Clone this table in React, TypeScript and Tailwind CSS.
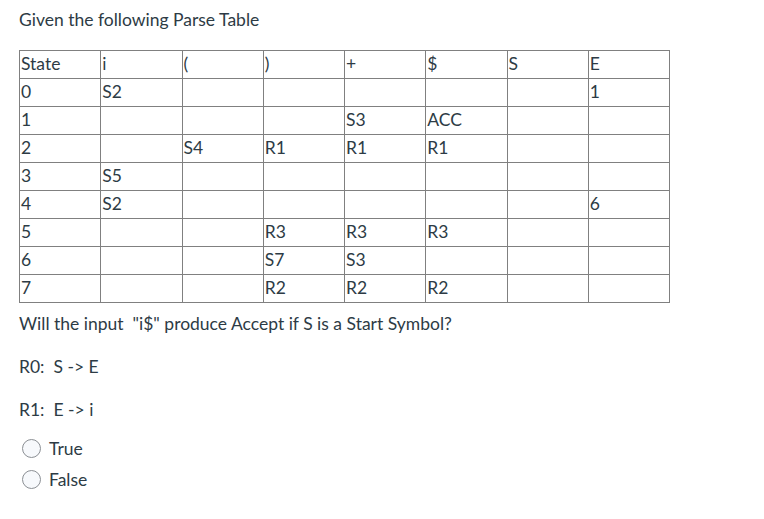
const header = ["State", "i", "(", ")", "+", "$", "S", "E"];

const rows: string[][] = [
  ["0", "S2", "", "", "", "", "", "1"],
  ["1", "", "", "", "S3", "ACC", "", ""],
  ["2", "", "S4", "R1", "R1", "R1", "", ""],
  ["3", "S5", "", "", "", "", "", ""],
  ["4", "S2", "", "", "", "", "", "6"],
  ["5", "", "", "R3", "R3", "R3", "", ""],
  ["6", "", "", "S7", "S3", "", "", ""],
  ["7", "", "", "R2", "R2", "R2", "", ""],
];

function Radio({ label }: { label: string }) {
  return (
    <label className="flex items-center h-[31px] cursor-pointer">
      <span className="ml-[3px] w-[19px] h-[19px] rounded-full border border-[#8b8f94] bg-[#f7f9fc]" />
      <span className="ml-[8px]">{label}</span>
    </label>
  );
}

export default function App() {
  return (
    <div
      className="min-h-[519px] bg-white pl-[19px] pt-[8px] text-[17.5px] leading-[24px] text-[#2d3b45]"
      style={{ fontFamily: "Lato, 'Liberation Sans', sans-serif" }}
    >
      <p>Given the following Parse Table</p>
      <table className="mt-[18px] w-[651px] table-fixed border-collapse">
        <tbody>
          {[header, ...rows].map((row, i) => (
            <tr key={i} className="h-[28px]">
              {row.map((cell, j) => (
                <td
                  key={j}
                  className="border border-[#808080] px-[1px] pt-0 pb-[2px] align-middle leading-[20px]"
                >
                  {cell}
                </td>
              ))}
            </tr>
          ))}
        </tbody>
      </table>
      <p className="mt-[9px]">Will the input &nbsp;"i$" produce Accept if S is a Start Symbol?</p>
      <p className="mt-[19px]">R0: &nbsp;S -&gt; E</p>
      <p className="mt-[19px]">R1: &nbsp;E -&gt; i</p>
      <div className="mt-[11px] flex flex-col">
        <Radio label="True" />
        <Radio label="False" />
      </div>
    </div>
  );
}
